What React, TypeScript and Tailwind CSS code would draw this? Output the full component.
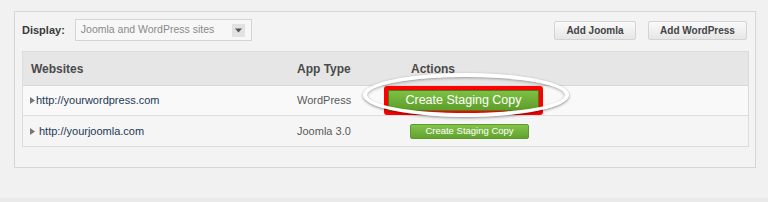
const rows = [
  { url: 'http://yourwordpress.com', app: 'WordPress', highlight: true },
  { url: 'http://yourjoomla.com', app: 'Joomla 3.0', highlight: false },
];

const App = () => {
  return (
    <div className="w-[768px] h-[202px] bg-[#f1f1f1] font-['Liberation_Sans',Arial,sans-serif] overflow-hidden flex flex-col">
      <div className="pt-[11px] pl-[14px] flex-1">
        <div className="w-[742px] h-[157px] border border-[#d6d6d6] bg-[#f3f3f3] px-[7px] pt-[7px]">
          {/* toolbar */}
          <div className="flex items-center h-[22px]">
            <span className="text-[11px] font-bold text-[#3a3a3a]">Display:</span>
            <div className="ml-[10px] w-[177px] h-[22px] border border-[#d4d4d4] bg-[#f7f7f7] flex items-center pl-[5px] pr-[6px]">
              <span className="text-[10.5px] text-[#8a8a8a]">Joomla and WordPress sites</span>
              <span className="ml-auto w-[13px] h-[13px] bg-[#e2e2e2] flex items-center justify-center">
                <svg width="7" height="5" viewBox="0 0 7 5"><path d="M0 0.5h7L3.5 4.5z" fill="#555" /></svg>
              </span>
            </div>
            <div className="ml-auto flex gap-[12px] pr-[1px]">
              <button className="w-[82px] h-[19px] rounded-[2px] border border-[#d3d3d3] bg-gradient-to-b from-[#fafafa] to-[#e6e6e6] text-[10px] font-bold text-[#444]">
                Add Joomla
              </button>
              <button className="w-[99px] h-[19px] rounded-[2px] border border-[#d3d3d3] bg-gradient-to-b from-[#fafafa] to-[#e6e6e6] text-[10px] font-bold text-[#444]">
                Add WordPress
              </button>
            </div>
          </div>

          {/* table */}
          <div className="relative mt-[10px] w-[727px] border border-[#dcdcdc]">
            <div className="flex items-center h-[34px] bg-[#e6e6e6] border-b border-[#d8d8d8] text-[12px] font-bold text-[#4a4a4a]">
              <div className="w-[266px] pl-[8px]">Websites</div>
              <div className="w-[114px] pl-[8px]">App Type</div>
              <div className="pl-[8px]">Actions</div>
            </div>
            {rows.map((r, i) => (
              <div
                key={r.url}
                className={`flex items-center h-[30px] text-[11px] ${i === 0 ? 'bg-[#f9f9f9] border-b border-[#dedede]' : 'bg-[#f5f5f5]'}`}
              >
                <div className="w-[266px] pl-[7px] flex items-center text-[#1c3a56]">
                  <svg width="5" height="7" viewBox="0 0 5 7" className={i === 0 ? 'mr-[1px]' : 'mr-[4px]'}>
                    <path d="M0 0l5 3.5L0 7z" fill="#777" />
                  </svg>
                  {r.url}
                </div>
                <div className="w-[114px] pl-[8px] text-[#5a5a5a]">{r.app}</div>
                <div className="flex-1 pl-[7px]">
                  {r.highlight ? (
                    <div className="w-[159px] h-[29px] rounded-[3px] border-[4px] border-[#ff0000] -ml-[26px] flex">
                      <div className="flex-1 border border-[#4a7a1e] bg-gradient-to-b from-[#7cc043] to-[#5e9e2a] flex items-center justify-center text-[12.5px] text-white">
                        Create Staging Copy
                      </div>
                    </div>
                  ) : (
                    <button className="w-[119px] h-[15px] rounded-[2px] border border-[#5d9a2a] bg-gradient-to-b from-[#84c44c] to-[#62a22e] text-[9.5px] text-white flex items-center justify-center">
                      Create Staging Copy
                    </button>
                  )}
                </div>
              </div>
            ))}
            {/* highlight ellipse */}
            <div className="absolute left-[340px] top-[21px] w-[206px] h-[44px] rounded-[50%] border-[4px] border-white shadow-[0_1px_3px_rgba(0,0,0,0.45),inset_0_1px_3px_rgba(0,0,0,0.35)] pointer-events-none" />
          </div>
        </div>
      </div>
      <div className="h-[4px] bg-[#eaeaea]" />
    </div>
  );
};

export default App;
